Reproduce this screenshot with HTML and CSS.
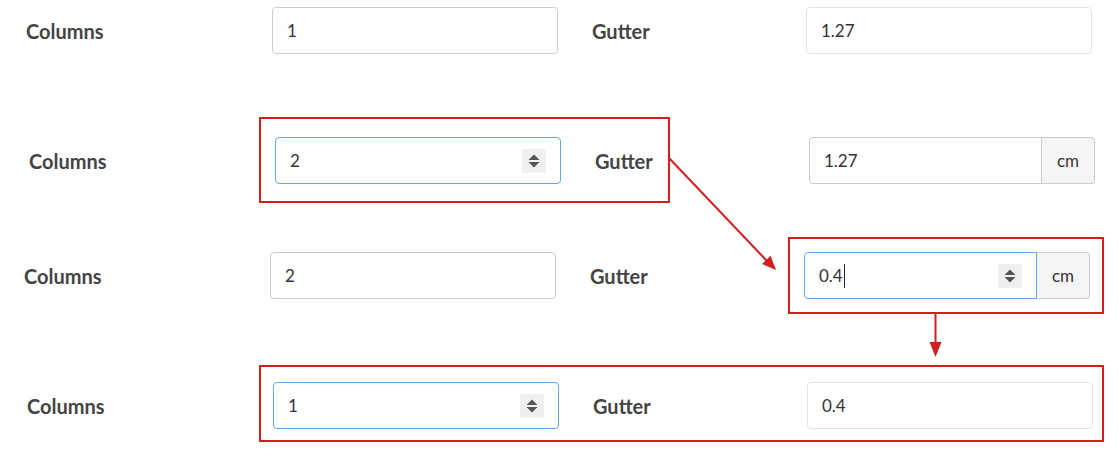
FILE: index.html
```html
<!DOCTYPE html>
<html>
<head>
<meta charset="utf-8">
<link rel="stylesheet" href="styles.css">
</head>
<body>
<div class="canvas">
  <div class="row r1">
    <div class="lbl">Columns</div>
    <div class="field plain"><span class="val">1</span></div>
    <div class="lbl glbl">Gutter</div>
    <div class="field light"><span class="val">1.27</span></div>
  </div>

  <div class="row r2">
    <div class="lbl">Columns</div>
    <div class="field focus"><span class="val">2</span>
      <span class="spin"><svg width="24" height="24" viewBox="0 0 24 24"><path d="M12 5.5 L17.5 11 L6.5 11 Z M12 18.5 L17.5 13 L6.5 13 Z" fill="#555"/></svg></span>
    </div>
    <div class="lbl glbl">Gutter</div>
    <div class="group">
      <div class="field plain grp"><span class="val">1.27</span></div>
      <div class="addon">cm</div>
    </div>
  </div>

  <div class="row r3">
    <div class="lbl">Columns</div>
    <div class="field plain"><span class="val">2</span></div>
    <div class="lbl glbl">Gutter</div>
    <div class="group">
      <div class="field focus grp"><span class="val">0.4</span><span class="caret"></span>
        <span class="spin"><svg width="24" height="24" viewBox="0 0 24 24"><path d="M12 5.5 L17.5 11 L6.5 11 Z M12 18.5 L17.5 13 L6.5 13 Z" fill="#555"/></svg></span>
      </div>
      <div class="addon">cm</div>
    </div>
  </div>

  <div class="row r4">
    <div class="lbl">Columns</div>
    <div class="field focus"><span class="val">1</span>
      <span class="spin"><svg width="24" height="24" viewBox="0 0 24 24"><path d="M12 5.5 L17.5 11 L6.5 11 Z M12 18.5 L17.5 13 L6.5 13 Z" fill="#555"/></svg></span>
    </div>
    <div class="lbl glbl">Gutter</div>
    <div class="field light"><span class="val">0.4</span></div>
  </div>

  <svg class="annot" width="1118" height="449" viewBox="0 0 1118 449">
    <g fill="none" stroke="#d21e1e" stroke-width="2">
      <rect x="260" y="118" width="409" height="84"/>
      <rect x="789" y="238" width="314" height="75"/>
      <rect x="260" y="366" width="843" height="75"/>
      <line x1="669" y1="158" x2="767" y2="261"/>
      <line x1="935.5" y1="314" x2="935.5" y2="345"/>
    </g>
    <g fill="#d21e1e">
      <polygon points="776,270 762,264 770.6,255.8"/>
      <polygon points="929.5,342 941.5,342 935.5,357"/>
    </g>
  </svg>
</div>
</body>
</html>
```

FILE: styles.css
```css
* { box-sizing: border-box; }
html, body { margin: 0; padding: 0; background: #fff; }
.canvas {
  position: relative;
  width: 1118px;
  height: 449px;
  overflow: hidden;
  font-family: Lato, "Open Sans", sans-serif;
  color: #333;
  padding-top: 7px;
}
.row {
  display: flex;
  align-items: center;
  height: 47px;
}
.r1 { padding-left: 26px; }
.r2 { padding-left: 29px; margin-top: 83px; }
.r3 { padding-left: 24px; margin-top: 68px; }
.r4 { padding-left: 27px; margin-top: 83px; }

.lbl {
  width: 246px;
  font-weight: 700;
  font-size: 20px;
  color: #444;
}
.glbl { width: 214px; margin-left: 34px; }

.field {
  display: flex;
  align-items: center;
  width: 286px;
  height: 47px;
  border: 1px solid #ccc;
  border-radius: 4px;
  padding: 0 14px 0 14px;
  font-size: 17px;
  color: #333;
  background: #fff;
}
.field.light { border-color: #e4e4e4; }
.field.focus { border-color: #62aae6; }
.val { line-height: 1; }
.caret {
  display: inline-block;
  width: 1px;
  height: 24px;
  background: #222;
  margin-left: 1px;
}
.spin {
  margin-left: auto;
  width: 24px;
  height: 24px;
  background: #efefef;
  display: flex;
}
.group {
  display: flex;
  width: 286px;
  height: 47px;
}
.group .field.grp {
  flex: 1;
  width: auto;
  border-radius: 4px 0 0 4px;
}
.addon {
  width: 53px;
  height: 47px;
  border: 1px solid #ccc;
  border-left: none;
  border-radius: 0 4px 4px 0;
  background: #f5f5f5;
  display: flex;
  align-items: center;
  justify-content: center;
  font-size: 17px;
  color: #333;
}
.annot {
  position: absolute;
  left: 0;
  top: 0;
  pointer-events: none;
}
```
